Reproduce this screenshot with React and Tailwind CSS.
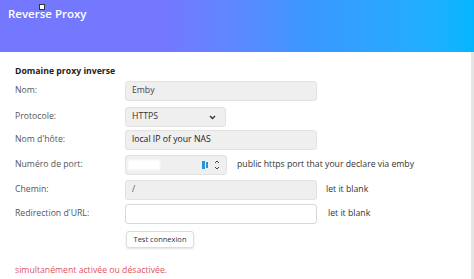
import React from 'react';

const font = { fontFamily: '"Open Sans", "Noto Sans", sans-serif' };

const Row = ({ label, children, note, noteClass = 'ml-[9px]', gap = 'mb-[5px]' }) => (
    <div className={`flex h-[20px] items-center ${gap}`}>
        <div className="w-[110px] shrink-0 text-[8.7px] text-[#555]">{label}</div>
        {children}
        {note && <div className={`${noteClass} text-[8.7px] text-[#333]`}>{note}</div>}
    </div>
);

const App = () => {
    return (
        <div className="relative flex h-[279px] w-[474px] overflow-hidden bg-white" style={font}>
            <div className="flex w-[471px] flex-col">
                <div className="relative h-[52px] bg-gradient-to-r from-[#7378ff] from-35% via-[#3a97ff] via-65% to-[#05b6ff]">
                    <div className="absolute left-[39px] top-[4px] h-[6px] w-[6px] border border-[#333] bg-white" />
                    <div className="pl-[8px] pt-[6px] text-[11.5px] font-semibold leading-[16px] text-white">Reverse Proxy</div>
                </div>
                <div className="px-[15px] pt-[13px]">
                    <div className="mb-[4px] h-[12px] text-[8.7px] font-bold leading-[12px] text-[#222]">Domaine proxy inverse</div>
                    <Row label="Nom:" gap="mb-[6px]">
                        <div className="flex h-[20px] w-[192px] items-center rounded-[3px] border border-[#e2e2e2] bg-[#efefef] px-[6px] text-[8.7px] text-[#444]">Emby</div>
                    </Row>
                    <Row label="Protocole:" gap="mb-[3px]">
                        <div className="flex h-[20px] w-[101px] items-center justify-between rounded-[3px] border border-[#e2e2e2] bg-[#efefef] pl-[6px] pr-[9px] text-[8.7px] text-[#333]">
                            <span>HTTPS</span>
                            <svg width="7" height="5" viewBox="0 0 7 5"><path d="M1 1l2.5 2.5L6 1" fill="none" stroke="#333" strokeWidth="1.4" /></svg>
                        </div>
                    </Row>
                    <Row label="Nom d'hôte:">
                        <div className="flex h-[20px] w-[192px] items-center rounded-[3px] border border-[#e2e2e2] bg-[#efefef] px-[6px] text-[8.7px] text-[#222]">local IP of your NAS</div>
                    </Row>
                    <Row label="Numéro de port:" note="public https port that your declare via emby" noteClass="ml-[10px]">
                        <div className="relative flex h-[20px] w-[102px] items-center rounded-[3px] border border-[#e2e2e2] bg-[#efefef] px-[2px]">
                            <div className="h-[10px] w-[32px] bg-white blur-[1px]" />
                            <div className="ml-auto mr-[6px] flex items-center gap-[1px]">
                                <div className="h-[8px] w-[3px] bg-[#2d8fd5]" />
                                <div className="h-[6px] w-[2px] bg-[#2d8fd5]" />
                            </div>
                            <svg className="mr-[4px]" width="6" height="12" viewBox="0 0 6 12"><path d="M1 4l2-2 2 2M1 8l2 2 2-2" fill="none" stroke="#444" strokeWidth="1" /></svg>
                        </div>
                    </Row>
                    <Row label="Chemin:" note="let it blank" gap="mb-[4px]">
                        <div className="flex h-[20px] w-[192px] items-center rounded-[3px] border border-[#e2e2e2] bg-[#efefef] px-[6px] text-[8.7px] text-[#555]">/</div>
                    </Row>
                    <Row label="Redirection d'URL:" note="let it blank" noteClass="ml-[11px]" gap="mb-0">
                        <div className="h-[20px] w-[192px] rounded-[3px] border border-[#d8d8d8] bg-white" />
                    </Row>
                    <div className="ml-[111px] mt-[7px] flex h-[17px] w-[68px] items-center justify-center rounded-[3px] border border-[#ddd] bg-white text-[7.5px] text-[#333] shadow-[0_1px_2px_rgba(0,0,0,0.12)]">Test connexion</div>
                    <div className="mt-[16px] text-[8.7px] text-[#e5525c]">simultanément activée ou désactivée.</div>
                </div>
            </div>
            <div className="flex w-[3px] flex-col">
                <div className="h-[52px] bg-[#05b6ff]" />
                <div className="flex-1 bg-[#e4e4e4]" />
            </div>
        </div>
    );
};

export default App;
